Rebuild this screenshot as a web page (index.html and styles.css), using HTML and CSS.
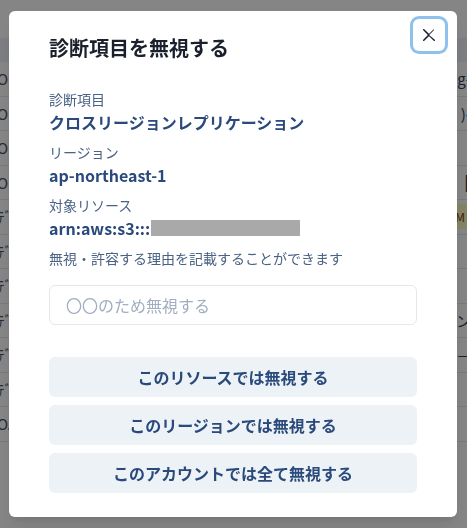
FILE: index.html
```html
<!DOCTYPE html>
<html lang="ja">
<head>
<meta charset="utf-8">
<title>診断項目を無視する</title>
<link rel="stylesheet" href="styles.css">
</head>
<body>
<div class="page">
  <div class="topbar"></div>
  <div class="thead"></div>
  <div class="row"><span class="lt">OE</span><span class="rt">g-</span></div>
  <div class="row"><span class="lt">OE</span><span class="rt">)-</span></div>
  <div class="row"><span class="lt">OE</span><span class="rt"></span></div>
  <div class="row"><span class="lt">OE</span><span class="rt big">I</span></div>
  <div class="row"><span class="lt">ﾃﾞ≡</span><span class="rt badge">M</span></div>
  <div class="row"><span class="lt">ﾃﾞ≡</span><span class="rt"></span></div>
  <div class="row"><span class="lt">ﾃﾞ≡</span><span class="rt"></span></div>
  <div class="row"><span class="lt">ﾃﾞ≡</span><span class="rt">ン</span></div>
  <div class="row"><span class="lt">ﾃﾞ≡</span><span class="rt">—</span></div>
  <div class="row"><span class="lt">ﾃﾞ≡</span><span class="rt"></span></div>
  <div class="row"><span class="lt">OA</span><span class="rt"></span></div>
</div>

<div class="overlay">
  <section class="modal" role="dialog" aria-labelledby="mtitle">
    <h2 class="title" id="mtitle">診断項目を無視する</h2>
    <button class="close" type="button" aria-label="閉じる">
      <svg viewBox="0 0 24 24" width="12" height="12" aria-hidden="true"><path fill="currentColor" d="M.439,21.44a1.5,1.5,0,0,0,2.122,2.121L11.823,14.3a.25.25,0,0,1,.354,0l9.262,9.263a1.5,1.5,0,1,0,2.122-2.121L12.3,12.177a.25.25,0,0,1,0-.354l9.263-9.262A1.5,1.5,0,0,0,21.439.44L12.177,9.7a.25.25,0,0,1-.354,0L2.561.44A1.5,1.5,0,0,0,.439,2.561L9.7,11.823a.25.25,0,0,1,0,.354Z"/></svg>
    </button>
    <div class="body">
      <div class="field">
        <div class="label">診断項目</div>
        <div class="value">クロスリージョンレプリケーション</div>
      </div>
      <div class="field">
        <div class="label">リージョン</div>
        <div class="value">ap-northeast-1</div>
      </div>
      <div class="field">
        <div class="label">対象リソース</div>
        <div class="value">arn:aws:s3:::<span class="redact"></span></div>
      </div>
      <div class="hint">無視・許容する理由を記載することができます</div>
      <input class="reason" type="text" placeholder="〇〇のため無視する">
      <div class="actions">
        <button class="act" type="button">このリソースでは無視する</button>
        <button class="act" type="button">このリージョンでは無視する</button>
        <button class="act" type="button">このアカウントでは全て無視する</button>
      </div>
    </div>
  </section>
</div>
</body>
</html>
```

FILE: styles.css
```css
* { box-sizing: border-box; }
html, body { margin: 0; padding: 0; }
body {
  width: 467px;
  height: 528px;
  overflow: hidden;
  background: #ffffff;
  font-family: "Noto Sans CJK JP", "Noto Sans", sans-serif;
  color: #1a202c;
}

/* background page */
.page { width: 467px; }
.topbar { height: 38px; background: #ffffff; }
.thead { height: 24px; background: #edf2f7; }
.row {
  height: 34.5px;
  border-bottom: 1px solid #e2e8f0;
  display: flex;
  justify-content: space-between;
  align-items: center;
  font-size: 15px;
  color: #4a5568;
}
.lt { margin-left: -3px; }
.rt { margin-right: -4px; color: #2a4365; }
.big { font-size: 22px; font-weight: 700; }
.badge { background: #fefcbf; color: #744210; font-size: 12px; padding: 4px 6px; }

/* overlay + modal */
.overlay {
  position: fixed;
  inset: 0;
  background: rgba(0, 0, 0, 0.48);
  display: flex;
  justify-content: flex-start;
  align-items: flex-start;
  padding-left: 9px;
}
.modal {
  position: relative;
  margin-top: 11px;
  width: 448px;
  background: #ffffff;
  border-radius: 6px;
  padding: 22px 40px 24px;
  box-shadow: 0 10px 15px -3px rgba(0,0,0,.1), 0 4px 6px -2px rgba(0,0,0,.05);
}
.title {
  margin: 0 0 26px;
  font-size: 20px;
  line-height: 30px;
  font-weight: 700;
  color: #1a202c;
}
.close {
  position: absolute;
  top: 8px;
  right: 12px;
  width: 32px;
  height: 32px;
  border: none;
  border-radius: 6px;
  background: transparent;
  color: #1a202c;
  display: flex;
  align-items: center;
  justify-content: center;
  padding: 0;
  box-shadow: 0 0 0 3px rgba(66, 153, 225, 0.6);
}
.body { display: flex; flex-direction: column; }
.field { margin-bottom: 8px; }
.label {
  font-size: 14px;
  line-height: 21px;
  color: #4a6285;
}
.value {
  font-size: 16px;
  line-height: 24px;
  font-weight: 700;
  color: #2a4a7b;
  display: flex;
  align-items: center;
}
.redact {
  display: inline-block;
  width: 149px;
  height: 16px;
  background: #a9a9a9;
  margin-left: 1px;
}
.hint {
  font-size: 14px;
  line-height: 21px;
  color: #4a6285;
  margin-bottom: 16px;
}
.reason {
  height: 40px;
  width: 100%;
  border: 1px solid #e2e8f0;
  border-radius: 6px;
  padding: 0 16px;
  font-family: inherit;
  font-size: 16px;
  color: #1a202c;
  background: #fff;
  outline: none;
}
.reason::placeholder { color: #a0aec0; }
.actions {
  margin-top: 32px;
  display: flex;
  flex-direction: column;
  gap: 8px;
}
.act {
  height: 40px;
  width: 100%;
  border: none;
  border-radius: 6px;
  background: #edf2f7;
  font-family: inherit;
  font-size: 16px;
  font-weight: 700;
  color: #2a4a7b;
  padding: 0 16px;
}
```
